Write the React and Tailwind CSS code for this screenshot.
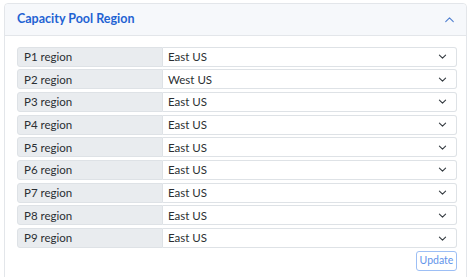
import React from 'react';

const regions = ['East US', 'West US', 'East US', 'East US', 'East US', 'East US', 'East US', 'East US', 'East US'];

const Chevron = ({ up }) => (
  <svg width="11" height="11" viewBox="0 0 16 16" fill="none" stroke="currentColor" strokeWidth="1.6" strokeLinecap="round" strokeLinejoin="round">
    {up ? <path d="M2.5 11 8 5.5l5.5 5.5" /> : <path d="M3.5 6 8 10.5 12.5 6" />}
  </svg>
);

export default function App() {
  return (
    <div className="w-[474px] h-[277px] overflow-hidden bg-white pt-[3px] pl-[4px] pr-[7px]" style={{ fontFamily: 'Lato, "Noto Sans", sans-serif' }}>
      <div className="border border-[#e3e6ea] rounded-[4px] h-[300px]">
        {/* Header */}
        <div className="h-[32px] flex items-center justify-between pl-[12px] pr-[11px] bg-[#f6f8fb] border-b border-[#e3e6ea] rounded-t-[4px]">
          <span className="text-[12.5px] font-bold text-[#1f63d3]">Capacity Pool Region</span>
          <span className="text-[#4f7fcf]"><Chevron up /></span>
        </div>

        {/* Body */}
        <div className="pl-[12px] pr-[9px] pt-[10.5px]">
          <div className="flex flex-col gap-[2.7px]">
            {regions.map((r, i) => (
              <div key={i} className="flex h-[20px] text-[11.5px] text-[#2b2f33]">
                <div className="w-[146px] flex items-center px-[6px] bg-[#e9ecef] border border-[#dee2e6] rounded-l-[3px]">
                  P{i + 1} region
                </div>
                <div className="flex-1 flex items-center justify-between pl-[5px] pr-[8px] border border-l-0 border-[#dee2e6] rounded-r-[3px] bg-white">
                  <span>{r}</span>
                  <span className="text-[#343a40]"><Chevron /></span>
                </div>
              </div>
            ))}
          </div>
          <div className="flex justify-end mt-[3px]">
            <button className="h-[20px] w-[41px] text-[10.5px] text-[#5f94ea] border border-[#9dbff5] rounded-[3px] bg-white">
              Update
            </button>
          </div>
        </div>
      </div>
    </div>
  );
}
